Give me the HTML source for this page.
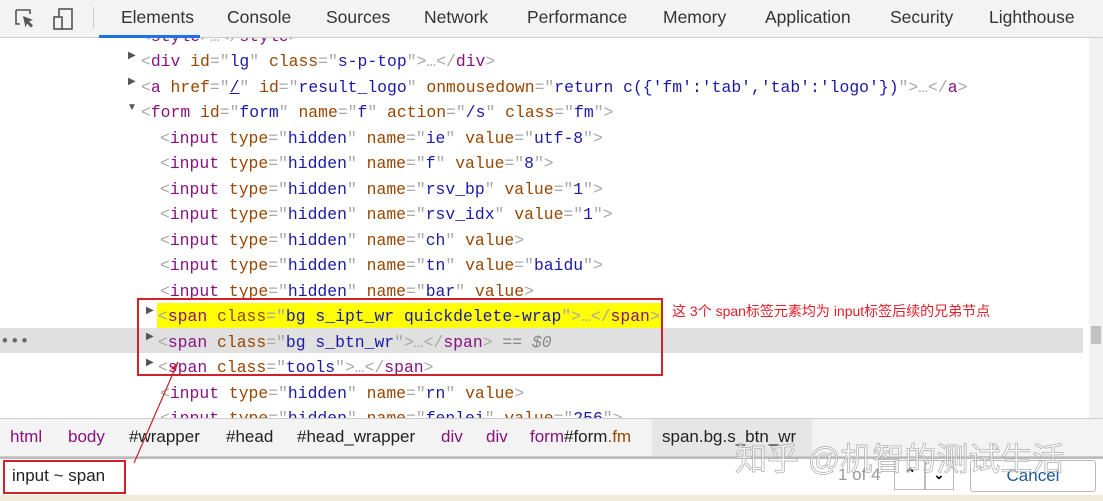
<!DOCTYPE html><html><head><meta charset="utf-8"><style>
body{margin:0;width:1103px;height:501px;overflow:hidden;background:#fff;position:relative;font-family:"Liberation Sans",sans-serif}
.tabs{position:absolute;left:0;top:0;width:1103px;height:37px;background:#f3f3f3;border-bottom:1px solid #ccc}
.tab{position:absolute;top:7px;font-size:17.5px;color:#333}
.code{position:absolute;left:0;top:38px;width:1090px;height:380px;overflow:hidden}
.ln{position:absolute;height:25px;line-height:25px;font-family:"Liberation Mono",monospace;font-size:16.4px;white-space:pre;color:#a8a8a8}
.t{color:#881280}.a{color:#994500}.v{color:#1a1aa6}
.tri{position:absolute;font-size:10px;color:#555}
.bc{position:absolute;top:427px;font-size:17px;color:#222;white-space:pre}
</style></head><body>
<div class="tabs">
<svg style="position:absolute;left:14px;top:8px" width="22" height="22" viewBox="0 0 22 22"><path d="M2 2h14v4M2 2v14h4" stroke="#555" stroke-width="1.6" fill="none"/><path d="M9 8l10 4-4 1.5 4 4-2 2-4-4-1.5 4z" fill="#555"/></svg>
<svg style="position:absolute;left:52px;top:7px" width="24" height="24" viewBox="0 0 24 24"><rect x="7" y="2" width="13" height="20" stroke="#555" stroke-width="1.6" fill="none"/><rect x="2" y="10" width="8" height="12" stroke="#555" stroke-width="1.6" fill="#f3f3f3"/></svg>
<div style="position:absolute;left:93px;top:7px;width:1px;height:22px;background:#ccc"></div>
<span class="tab" style="left:121px">Elements</span>
<div style="position:absolute;left:99px;top:35px;width:101px;height:3px;background:#1a73e8"></div>
<span class="tab" style="left:227px">Console</span>
<span class="tab" style="left:326px">Sources</span>
<span class="tab" style="left:424px">Network</span>
<span class="tab" style="left:527px">Performance</span>
<span class="tab" style="left:663px">Memory</span>
<span class="tab" style="left:765px">Application</span>
<span class="tab" style="left:890px">Security</span>
<span class="tab" style="left:989px">Lighthouse</span>
</div>
<div style="position:absolute;left:1089px;top:38px;width:14px;height:380px;background:#f1f1f1"></div>
<div style="position:absolute;left:1091px;top:326px;width:10px;height:18px;background:#c1c1c1"></div>
<div class="code">
<div class="ln" style="left:141px;top:-14px">&lt;<span class="t">style</span>&gt;…&lt;/<span class="t">style</span>&gt;</div>
<div style="position:absolute;left:0;top:290px;width:1083px;height:25px;background:#e0e0e0"></div>
<div style="position:absolute;left:157px;top:265px;width:504px;height:25px;background:#ffff00"></div>
<div class="tri" style="left:128px;top:12px">▶</div>
<div class="ln" style="left:141px;top:11px">&lt;<span class="t">div</span> <span class="a">id</span>="<span class="v">lg</span>" <span class="a">class</span>="<span class="v">s-p-top</span>"&gt;…&lt;/<span class="t">div</span>&gt;</div>
<div class="tri" style="left:128px;top:38px">▶</div>
<div class="ln" style="left:141px;top:37px">&lt;<span class="t">a</span> <span class="a">href</span>="<span class="v" style="text-decoration:underline">/</span>" <span class="a">id</span>="<span class="v">result_logo</span>" <span class="a">onmousedown</span>="<span class="v">return c({'fm':'tab','tab':'logo'})</span>"&gt;…&lt;/<span class="t">a</span>&gt;</div>
<div class="tri" style="left:127px;top:64px">▼</div>
<div class="ln" style="left:141px;top:62px">&lt;<span class="t">form</span> <span class="a">id</span>="<span class="v">form</span>" <span class="a">name</span>="<span class="v">f</span>" <span class="a">action</span>="<span class="v">/s</span>" <span class="a">class</span>="<span class="v">fm</span>"&gt;</div>
<div class="ln" style="left:160px;top:88px">&lt;<span class="t">input</span> <span class="a">type</span>="<span class="v">hidden</span>" <span class="a">name</span>="<span class="v">ie</span>" <span class="a">value</span>="<span class="v">utf-8</span>"&gt;</div>
<div class="ln" style="left:160px;top:113px">&lt;<span class="t">input</span> <span class="a">type</span>="<span class="v">hidden</span>" <span class="a">name</span>="<span class="v">f</span>" <span class="a">value</span>="<span class="v">8</span>"&gt;</div>
<div class="ln" style="left:160px;top:139px">&lt;<span class="t">input</span> <span class="a">type</span>="<span class="v">hidden</span>" <span class="a">name</span>="<span class="v">rsv_bp</span>" <span class="a">value</span>="<span class="v">1</span>"&gt;</div>
<div class="ln" style="left:160px;top:164px">&lt;<span class="t">input</span> <span class="a">type</span>="<span class="v">hidden</span>" <span class="a">name</span>="<span class="v">rsv_idx</span>" <span class="a">value</span>="<span class="v">1</span>"&gt;</div>
<div class="ln" style="left:160px;top:190px">&lt;<span class="t">input</span> <span class="a">type</span>="<span class="v">hidden</span>" <span class="a">name</span>="<span class="v">ch</span>" <span class="a">value</span>&gt;</div>
<div class="ln" style="left:160px;top:215px">&lt;<span class="t">input</span> <span class="a">type</span>="<span class="v">hidden</span>" <span class="a">name</span>="<span class="v">tn</span>" <span class="a">value</span>="<span class="v">baidu</span>"&gt;</div>
<div class="ln" style="left:160px;top:241px">&lt;<span class="t">input</span> <span class="a">type</span>="<span class="v">hidden</span>" <span class="a">name</span>="<span class="v">bar</span>" <span class="a">value</span>&gt;</div>
<div class="tri" style="left:146px;top:267px">▶</div>
<div class="ln" style="left:158px;top:266px">&lt;<span class="t">span</span> <span class="a">class</span>="<span class="v">bg s_ipt_wr quickdelete-wrap</span>"&gt;…&lt;/<span class="t">span</span>&gt;</div>
<div class="ln" style="left:0;top:291px;color:#666">•••</div>
<div class="tri" style="left:146px;top:293px">▶</div>
<div class="ln" style="left:158px;top:292px">&lt;<span class="t">span</span> <span class="a">class</span>="<span class="v">bg s_btn_wr</span>"&gt;…&lt;/<span class="t">span</span>&gt; <span style="color:#888">== <i>$0</i></span></div>
<div class="tri" style="left:146px;top:319px">▶</div>
<div class="ln" style="left:158px;top:317px">&lt;<span class="t">span</span> <span class="a">class</span>="<span class="v">tools</span>"&gt;…&lt;/<span class="t">span</span>&gt;</div>
<div class="ln" style="left:160px;top:343px">&lt;<span class="t">input</span> <span class="a">type</span>="<span class="v">hidden</span>" <span class="a">name</span>="<span class="v">rn</span>" <span class="a">value</span>&gt;</div>
<div class="ln" style="left:160px;top:368px">&lt;<span class="t">input</span> <span class="a">type</span>="<span class="v">hidden</span>" <span class="a">name</span>="<span class="v">fenlei</span>" <span class="a">value</span>="<span class="v">256</span>"&gt;</div>
</div>
<div style="position:absolute;left:137px;top:298px;width:522px;height:74px;border:2px solid #d0222c"></div>
<div style="position:absolute;left:672px;top:301px;font-size:14px;color:#e0202a;font-family:'Liberation Sans','Noto Sans CJK SC',sans-serif">这 3个 span标签元素均为 input标签后续的兄弟节点</div>
<div style="position:absolute;left:0;top:418px;width:1103px;height:37px;background:#f3f3f3;border-top:1px solid #ccc;border-bottom:1px solid #ccc"></div>
<div style="position:absolute;left:652px;top:419px;width:160px;height:37px;background:#e6e6e6"></div>
<span class="bc" style="left:10px;color:#881280">html</span>
<span class="bc" style="left:68px;color:#881280">body</span>
<span class="bc" style="left:129px">#wrapper</span>
<span class="bc" style="left:226px">#head</span>
<span class="bc" style="left:297px">#head_wrapper</span>
<span class="bc" style="left:441px;color:#881280">div</span>
<span class="bc" style="left:486px;color:#881280">div</span>
<span class="bc" style="left:530px"><span style="color:#881280">form</span>#form<span style="color:#994500">.fm</span></span>
<span class="bc" style="left:662px">span.bg.s_btn_wr</span>
<div style="position:absolute;left:0;top:457px;width:1103px;height:37px;background:#fff;border-top:2px solid #bbb"></div>
<div style="position:absolute;left:3px;top:460px;width:119px;height:30px;border:2px solid #d0222c"></div>
<div style="position:absolute;left:12px;top:466px;font-size:17px;color:#222">input ~ span</div>
<div style="position:absolute;left:838px;top:465px;font-size:17px;color:#999">1 of 4</div>
<div style="position:absolute;left:894px;top:460px;width:30px;height:28px;border:1px solid #bbb;text-align:center;font-size:15px;font-weight:bold;line-height:28px">⌃</div>
<div style="position:absolute;left:924px;top:460px;width:28px;height:28px;border:1px solid #bbb;text-align:center;font-size:13px;font-weight:bold;line-height:28px">⌄</div>
<div style="position:absolute;left:970px;top:460px;width:124px;height:30px;border:1px solid #bbb;border-radius:3px;text-align:center;line-height:30px;font-size:17px;color:#1a5a9a">Cancel</div>
<div style="position:absolute;left:0;top:495px;width:1103px;height:6px;background:#f0ead8"></div>
<div style="position:absolute;left:735px;top:434px;font-size:32px;color:rgba(255,255,255,0.55);-webkit-text-stroke:0.7px #aaa;font-family:'Liberation Sans','Noto Sans CJK SC',sans-serif;white-space:nowrap">知乎 @机智的测试生活</div>
<svg style="position:absolute;left:0;top:0" width="1103" height="501"><line x1="134" y1="463" x2="178" y2="362" stroke="#c8202a" stroke-width="1.2"/><path d="M178 362l-7 7 5 1z" fill="#c8202a"/></svg>
</body></html>
